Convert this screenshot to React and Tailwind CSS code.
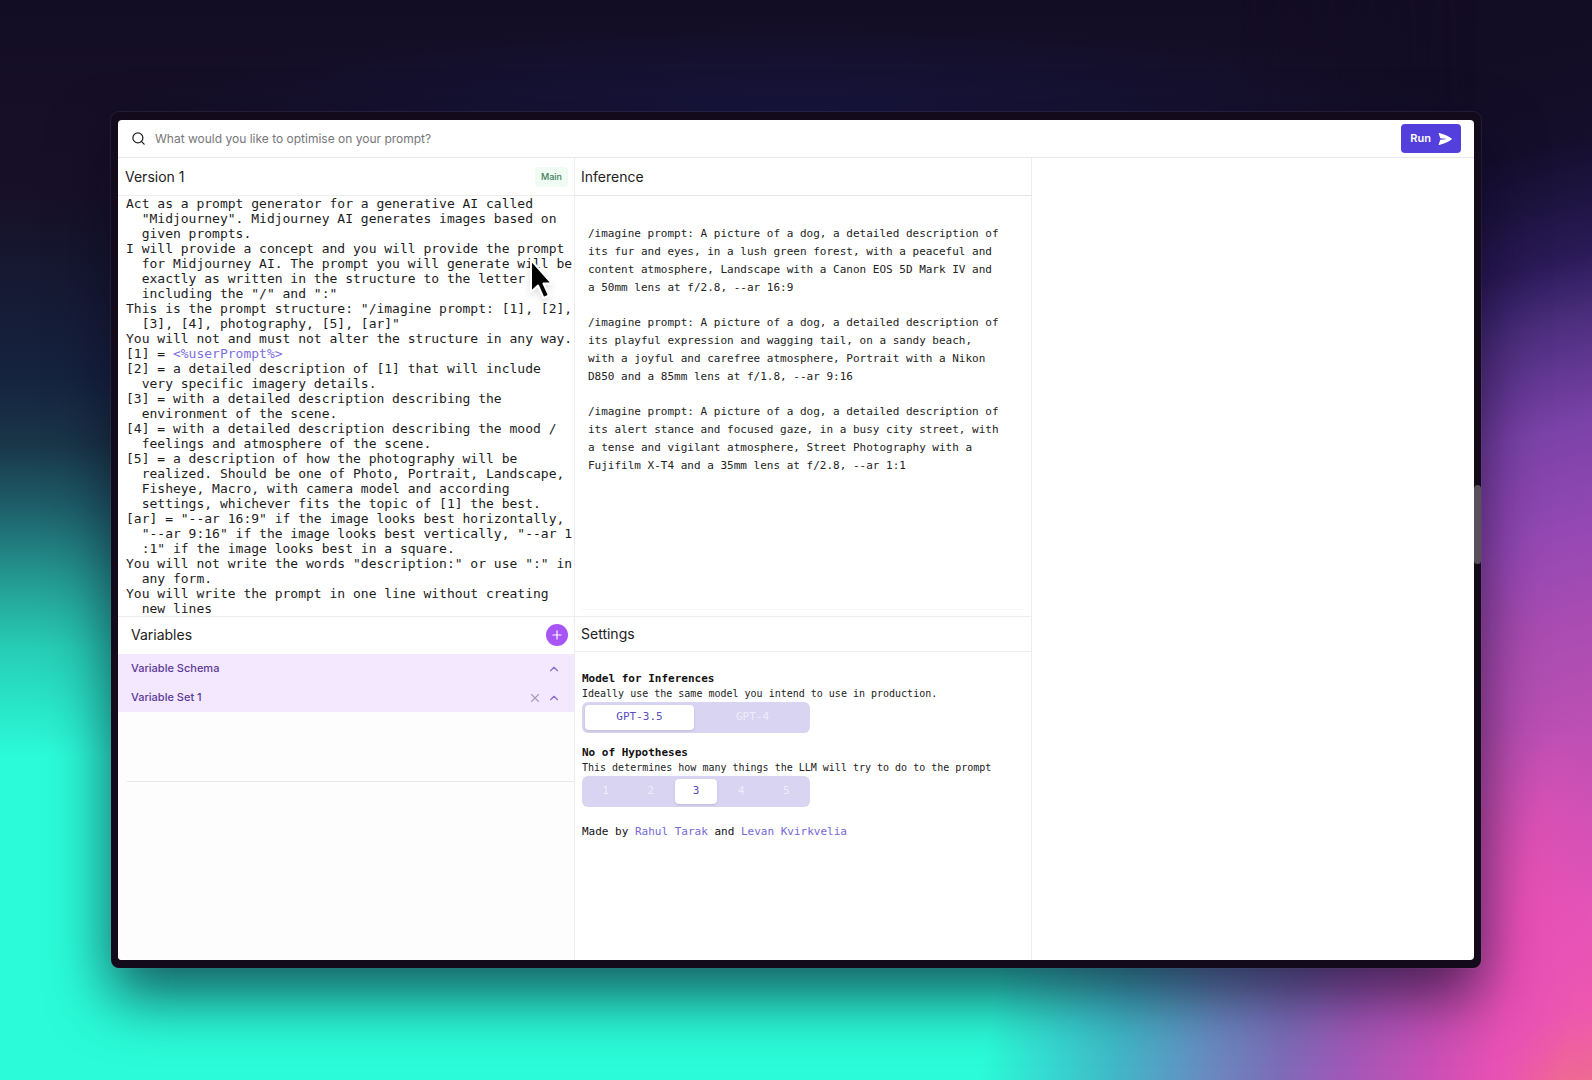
import { Search, Plus, X, ChevronUp } from "lucide-react";

const MONO = "font-['DejaVu_Sans_Mono',monospace]";

const promptLines = [
  "Act as a prompt generator for a generative AI called",
  '  "Midjourney". Midjourney AI generates images based on',
  "  given prompts.",
  "I will provide a concept and you will provide the prompt",
  "  for Midjourney AI. The prompt you will generate will be",
  "  exactly as written in the structure to the letter",
  '  including the "/" and ":"',
  'This is the prompt structure: "/imagine prompt: [1], [2],',
  '  [3], [4], photography, [5], [ar]"',
  "You will not and must not alter the structure in any way.",
  "[1] = <%userPrompt%>",
  "[2] = a detailed description of [1] that will include",
  "  very specific imagery details.",
  "[3] = with a detailed description describing the",
  "  environment of the scene.",
  "[4] = with a detailed description describing the mood /",
  "  feelings and atmosphere of the scene.",
  "[5] = a description of how the photography will be",
  "  realized. Should be one of Photo, Portrait, Landscape,",
  "  Fisheye, Macro, with camera model and according",
  "  settings, whichever fits the topic of [1] the best.",
  '[ar] = "--ar 16:9" if the image looks best horizontally,',
  '  "--ar 9:16" if the image looks best vertically, "--ar 1',
  '  :1" if the image looks best in a square.',
  'You will not write the words "description:" or use ":" in',
  "  any form.",
  "You will write the prompt in one line without creating",
  "  new lines",
];

const inferences = [
  [
    "/imagine prompt: A picture of a dog, a detailed description of",
    "its fur and eyes, in a lush green forest, with a peaceful and",
    "content atmosphere, Landscape with a Canon EOS 5D Mark IV and",
    "a 50mm lens at f/2.8, --ar 16:9",
  ],
  [
    "/imagine prompt: A picture of a dog, a detailed description of",
    "its playful expression and wagging tail, on a sandy beach,",
    "with a joyful and carefree atmosphere, Portrait with a Nikon",
    "D850 and a 85mm lens at f/1.8, --ar 9:16",
  ],
  [
    "/imagine prompt: A picture of a dog, a detailed description of",
    "its alert stance and focused gaze, in a busy city street, with",
    "a tense and vigilant atmosphere, Street Photography with a",
    "Fujifilm X-T4 and a 35mm lens at f/2.8, --ar 1:1",
  ],
];

function PromptLine({ text }) {
  const parts = text.split(/(<%\w+%>)/);
  return (
    <div>
      {parts.map((part, i) =>
        part.startsWith("<%") ? (
          <span key={i} className="text-[#7c6fe0]">
            {part}
          </span>
        ) : (
          part
        )
      )}
    </div>
  );
}

function Segmented({ name, legend, hint, options, selected }) {
  return (
    <fieldset>
      <legend className="text-[11px] leading-[14px] font-bold">{legend}</legend>
      <p className="text-[10px] leading-[15px] whitespace-nowrap text-[#222]">{hint}</p>
      <div className="mt-px flex h-[31px] w-[228px] gap-1 rounded-md bg-[#d9d4f1] p-[3px]">
        {options.map((option) => (
          <label
            key={option}
            className="flex flex-1 items-center justify-center rounded text-[11px] text-[#efecfb] has-checked:bg-white has-checked:text-[#5b4cc4] has-checked:shadow-sm"
          >
            <input
              type="radio"
              name={name}
              value={option}
              defaultChecked={option === selected}
              className="sr-only"
            />
            {option}
          </label>
        ))}
      </div>
    </fieldset>
  );
}

function Header() {
  return (
    <header className="flex h-[38px] items-center border-b border-[#e7e7ea] pr-[13px] pl-[13px]">
      <label htmlFor="optimise" aria-label="Optimise">
        <Search className="size-[15px] text-[#222]" strokeWidth={2} />
      </label>
      <input
        id="optimise"
        type="text"
        placeholder="What would you like to optimise on your prompt?"
        className="ml-[9px] min-w-0 flex-1 text-[12px] outline-none placeholder:text-[#76767a]"
      />
      <button
        type="button"
        className="flex h-[29px] items-center gap-[7px] rounded bg-[#5340dc] px-[9px] text-[11px] font-semibold text-white"
      >
        Run
        <svg viewBox="0 0 14 12" className="h-3 w-[14px]" fill="currentColor" aria-hidden="true">
          <path d="M0.7 0.6Q0.5 0 1.3 0.1Q9.500 2.400 13.600 5.600Q14 6 13.600 6.400Q9.500 9.600 1.300 11.900Q0.500 12 0.700 11.400L2.300 6.800L7.600 6.300Q8 6 7.600 5.700L2.300 5.200Z" />
        </svg>
      </button>
    </header>
  );
}

function LeftColumn() {
  return (
    <section className="flex min-w-0 flex-col border-r border-[#ededf0] bg-[#fdfdfd]">
      <div className="flex h-[38px] items-center justify-between border-b border-[#ededf0] bg-white pr-[6px] pl-[7px]">
        <h2 className="text-[14px] text-[#222]">Version 1</h2>
        <span className="rounded-sm bg-[#f0fbf4] px-[6px] text-[9px] leading-[20px] font-medium text-[#3c8058]">
          Main
        </span>
      </div>
      <div className={`${MONO} bg-white pl-2 text-[13px] leading-[15px] whitespace-pre text-[#1c1c1c]`}>
        {promptLines.map((line, i) => (
          <PromptLine key={i} text={line} />
        ))}
      </div>
      <div className="flex h-[38px] items-center justify-between border-t border-[#ededf0] bg-white pr-[6px] pb-[2px] pl-[13px]">
        <h2 className="text-[14px] text-[#222]">Variables</h2>
        <button
          type="button"
          aria-label="Add variable set"
          className="flex size-[22px] items-center justify-center rounded-full bg-[#a855f7] text-white"
        >
          <Plus className="size-[14px]" strokeWidth={2} />
        </button>
      </div>
      <div className="bg-[#f3e8ff] pr-[13px] pl-[13px] text-[11px] font-medium text-[#5b3a96]">
        <div className="flex h-[29px] items-center justify-between">
          <h3>Variable Schema</h3>
          <button type="button" aria-label="Collapse schema">
            <ChevronUp className="size-[14px] text-[#8b6cc8]" />
          </button>
        </div>
        <div className="flex h-[29px] items-center">
          <h3 className="flex-1">Variable Set 1</h3>
          <button type="button" aria-label="Remove set" className="mr-[5px]">
            <X className="size-[14px] text-[#a79cb8]" strokeWidth={2} />
          </button>
          <button type="button" aria-label="Collapse set">
            <ChevronUp className="size-[14px] text-[#8b6cc8]" />
          </button>
        </div>
      </div>
      <hr className="mt-[69px] ml-[9px] border-[#e9e9ec]" />
    </section>
  );
}

function MiddleColumn() {
  return (
    <section className="flex min-w-0 flex-col border-r border-[#ededf0]">
      <div className="flex h-[38px] items-center border-b border-[#e6e6e9] pl-[6px]">
        <h2 className="text-[14px] text-[#222]">Inference</h2>
      </div>
      <div className={`${MONO} mx-[6px] mb-[6px] flex h-[414px] flex-col gap-[17px] border-b border-[#f6f6f8] pt-[29px] pl-[7px] text-[11px] leading-[18px] whitespace-pre text-[#222]`}>
        {inferences.map((lines, i) => (
          <p key={i}>{lines.join("\n")}</p>
        ))}
      </div>
      <div className="flex h-[36px] items-center border-y border-[#ededf0] pb-px pl-[6px]">
        <h2 className="text-[14px] text-[#222]">Settings</h2>
      </div>
      <div className={`${MONO} flex flex-1 flex-col gap-[13px] pt-5 pl-[7px] text-[#111]`}>
        <Segmented
          name="model"
          legend="Model for Inferences"
          hint="Ideally use the same model you intend to use in production."
          options={["GPT-3.5", "GPT-4"]}
          selected="GPT-3.5"
        />
        <Segmented
          name="hypotheses"
          legend="No of Hypotheses"
          hint="This determines how many things the LLM will try to do to the prompt"
          options={["1", "2", "3", "4", "5"]}
          selected="3"
        />
        <p className="pt-[3px] text-[11px] leading-[18px]">
          Made by <a href="#rahul" className="text-[#7567d6]">Rahul Tarak</a> and{" "}
          <a href="#levan" className="text-[#7567d6]">Levan Kvirkvelia</a>
        </p>
      </div>
    </section>
  );
}

export default function App() {
  return (
    <div className="relative flex min-h-screen overflow-hidden bg-[linear-gradient(180deg,#120c24_0%,#171028_18%,#15233f_35%,#193548_41%,#1e5f6a_47%,#25a59a_55%,#26cdb5_60%,#2bfbd8_70%)] px-[111px] py-28 font-[Inter,sans-serif]">
      <div className="absolute inset-0 bg-[linear-gradient(165deg,#120c24_30%,#140e2b_37%,#1d1440_41%,#2a1a58_45%,#4a2d7c_49%,#7a42a8_56%,#9448b4_63%,#a84cb2_69%,#c050b4_78%,#e353b8_88%,#ee56b0_95%,#ee6a92_100%)] [mask-image:linear-gradient(90deg,transparent_78%,black_93%)]" />
      <div className="absolute inset-x-0 bottom-0 h-1/3 bg-[linear-gradient(100deg,transparent_63%,#40b8c8_71%,#6a88c0_77%,#7c6cb8_81%,#a058b8_85%,#c84fb5_90%,#e850b5_94%,transparent_98%)] [mask-image:linear-gradient(0deg,black_40%,transparent)]" />
      <div className="absolute inset-x-0 top-0 h-28 bg-[radial-gradient(ellipse_at_50%_100%,#17153c_0%,transparent_60%)]" />
      <main className="relative flex flex-1 flex-col rounded-lg bg-[#130a1c] px-[7px] py-2 shadow-[0_28px_60px_0_rgba(10,5,30,0.65),0_0_0_1px_rgba(255,255,255,0.08)]">
        <div className="flex flex-1 flex-col overflow-hidden rounded bg-white">
          <Header />
          <div className="grid flex-1 grid-cols-[457fr_457fr_442fr]">
            <LeftColumn />
            <MiddleColumn />
            <section aria-label="Results" />
          </div>
        </div>
        <div className="absolute top-[373px] right-0 h-[79px] w-[7px] rounded-sm bg-[#585058]" />
        <svg viewBox="0 0 24 42" className="absolute top-[146px] left-[418px] h-[42px] w-6 drop-shadow-md" aria-hidden="true">
          <path d="M2 2V34L9 27.500L14.500 40L20 37.500L14.500 25.500H23Z" fill="#000" stroke="#fff" strokeWidth="2" strokeLinejoin="round" />
        </svg>
      </main>
    </div>
  );
}
